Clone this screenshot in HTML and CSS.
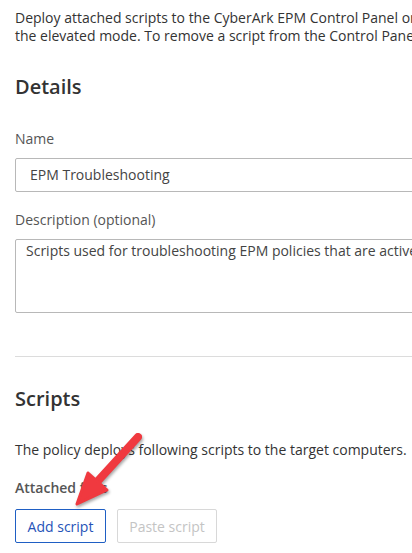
FILE: index.html
```html
<!DOCTYPE html>
<html>
<head>
<meta charset="utf-8">
<link rel="stylesheet" href="styles.css">
</head>
<body>
<div class="page">
  <p class="intro">
    <span class="line">Deploy attached scripts to the CyberArk EPM Control Panel on end-user computers to run in</span>
    <span class="line">the elevated mode. To remove a script from the Control Panel, delete it from the list.</span>
  </p>

  <section class="section details">
    <h2 class="heading">Details</h2>
    <div class="field">
      <label class="label">Name</label>
      <div class="input">EPM Troubleshooting</div>
    </div>
    <div class="field">
      <label class="label">Description (optional)</label>
      <div class="textarea">Scripts used for troubleshooting EPM policies that are active on end-user computers</div>
    </div>
  </section>

  <hr class="divider">

  <section class="section scripts">
    <h2 class="heading">Scripts</h2>
    <p class="desc">The policy deploys following scripts to the target computers.</p>
    <div class="attached">Attached files</div>
    <div class="buttons">
      <button class="btn btn-primary">Add script</button>
      <button class="btn btn-disabled">Paste script</button>
    </div>
  </section>
</div>

<svg class="arrow" width="412" height="553" viewBox="0 0 412 553">
  <line x1="138" y1="437" x2="96" y2="483" stroke="#f0393f" stroke-width="8" stroke-linecap="round"/>
  <polygon points="77,504 88,473 107,490" fill="#f0393f" stroke="#f0393f" stroke-width="3" stroke-linejoin="round"/>
</svg>
</body>
</html>
```

FILE: styles.css
```css
html, body {
  margin: 0;
  padding: 0;
  background: #ffffff;
  overflow: hidden;
}
body {
  font-family: "Open Sans", "Liberation Sans", sans-serif;
  color: #333333;
  width: 412px;
  height: 553px;
  position: relative;
}
.page {
  width: 700px;
  padding: 9px 0 0 15px;
}
.intro {
  margin: 0;
  font-size: 14px;
  line-height: 18px;
  color: #333;
}
.intro .line {
  display: block;
  white-space: nowrap;
}
.heading {
  margin: 0;
  font-size: 20px;
  font-weight: 600;
  line-height: 27px;
  color: #333;
}
.section {
  display: flex;
  flex-direction: column;
}
.details {
  margin-top: 28px;
}
.field {
  display: flex;
  flex-direction: column;
}
.field:first-of-type {
  margin-top: 29px;
}
.field + .field {
  margin-top: 18px;
}
.label {
  font-size: 14px;
  line-height: 19px;
  color: #555;
  margin-bottom: 10px;
}
.input {
  box-sizing: border-box;
  height: 34px;
  border: 1px solid #b8b8b8;
  border-radius: 2px;
  padding: 0 14px;
  font-size: 14px;
  line-height: 32px;
  color: #444;
  white-space: nowrap;
}
.textarea {
  box-sizing: border-box;
  height: 74px;
  border: 1px solid #b8b8b8;
  border-radius: 2px;
  padding: 3px 10px;
  font-size: 14px;
  line-height: 16px;
  color: #444;
  white-space: nowrap;
}
.divider {
  margin: 43px 0 0 0;
  border: 0;
  border-top: 1px solid #dcdcdc;
  height: 0;
}
.scripts {
  margin-top: 28px;
}
.desc {
  margin: 28px 0 0 0;
  font-size: 14px;
  line-height: 19px;
  color: #333;
}
.attached {
  margin-top: 19px;
  font-size: 14px;
  font-weight: 600;
  line-height: 19px;
  color: #555;
}
.buttons {
  display: flex;
  gap: 11px;
  margin-top: 12px;
}
.btn {
  box-sizing: border-box;
  height: 34px;
  padding: 0;
  font-family: "Open Sans", "Liberation Sans", sans-serif;
  font-size: 14px;
  white-space: nowrap;
  background: #fff;
  border-radius: 2px;
  cursor: pointer;
}
.btn-primary {
  border: 1px solid #1f5fc4;
  color: #2553b8;
  width: 91px;
}
.btn-disabled {
  border: 1px solid #d8d8d8;
  color: #c4c4c4;
  width: 100px;
}
.arrow {
  position: absolute;
  left: 0;
  top: 0;
  pointer-events: none;
  filter: drop-shadow(1px 2px 1.5px rgba(0,0,0,0.35));
}
```
